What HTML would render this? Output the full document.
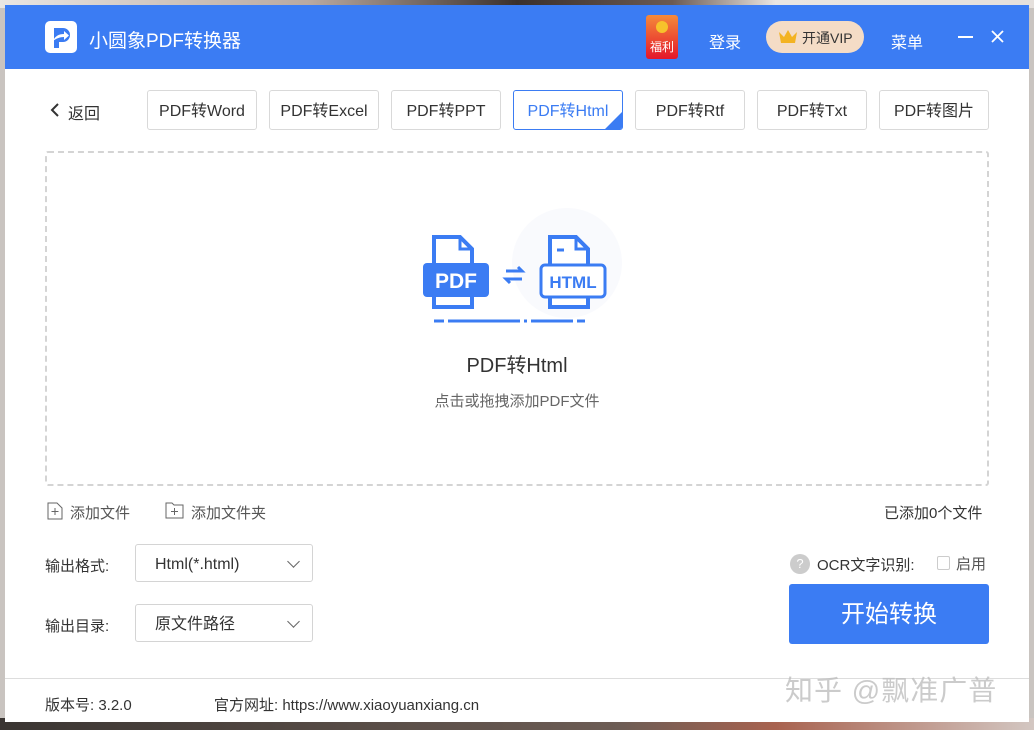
<!DOCTYPE html><html><head><meta charset="utf-8"><style>
*{margin:0;padding:0;box-sizing:border-box}
body{width:1034px;height:730px;overflow:hidden;background:#c9c4c0;font-family:"Liberation Sans","Noto Sans CJK SC",sans-serif;position:relative;color:#333}
.bgtop{position:absolute;left:0;top:0;width:1034px;height:8px;background:linear-gradient(90deg,#e9e6e3 0,#b9a9a0 30%,#3a302c 50%,#6b5a52 65%,#eae6e2 75%,#e5e0dc 100%)}
.bgbot{position:absolute;left:0;top:718px;width:1034px;height:12px;background:linear-gradient(90deg,#3a3532 0,#6d5d55 60%,#a8624f 75%,#d3c7c2 100%)}
.win{position:absolute;left:5px;top:5px;width:1024px;height:717px;background:#fff;overflow:hidden}
.hdr{position:absolute;left:0;top:0;width:1024px;height:64px;background:#3b7cf3;color:#fff}
.abs{position:absolute}
.tab{position:absolute;top:85px;width:110px;height:40px;border:1px solid #d9d9d9;border-radius:3px;font-size:16px;text-align:center;line-height:42px;color:#333}
.sel{border-color:#3b7cf3;color:#3b7cf3;overflow:hidden}
.sel:after{content:"";position:absolute;right:-12px;bottom:-12px;width:24px;height:24px;background:#3b7cf3;transform:rotate(45deg)}
.sel span.ck{position:absolute;right:2px;bottom:-9px;color:#fff;font-size:11px;z-index:2}
.drop{position:absolute;left:40px;top:146px;width:944px;height:335px;border:2px dashed #d4d4d4;border-radius:3px}
.sel-box{position:absolute;left:130px;width:178px;height:38px;border:1px solid #d4d4d4;border-radius:3px;font-size:16px;line-height:40px;padding-left:19px}
.sel-box:after{content:"";position:absolute;right:14px;top:12px;width:8px;height:8px;border-right:1.5px solid #666;border-bottom:1.5px solid #666;transform:rotate(45deg)}
</style></head><body>
<div class="bgtop"></div><div class="bgbot"></div>
<div class="win">
<div class="hdr">
 <div class="abs" style="left:40px;top:16px;width:32px;height:32px;background:#fff;border-radius:5px">
  <svg width="32" height="32" viewBox="0 0 32 32"><path d="M9 27V7h9a7 7 0 0 1 0 14h-4v6z" fill="#3b7cf3"/><path d="M8 20c2-5 6-7 11-7v-3l5 4.5-5 4.5v-3c-4 0-8 1.5-11 4z" fill="#fff"/></svg>
 </div>
 <div class="abs" style="left:84px;top:21px;font-size:19px">小圆象PDF转换器</div>
 <div class="abs" style="left:641px;top:10px;width:32px;height:44px;border-radius:3px;background:linear-gradient(#f58a3a,#e4162b)"><div style="position:absolute;left:10px;top:6px;width:12px;height:12px;border-radius:6px;background:#f7c22b"></div><div style="position:absolute;left:0;top:23px;width:32px;text-align:center;font-size:12px">福利</div></div>
 <div class="abs" style="left:704px;top:24px;font-size:16px">登录</div>
 <div class="abs" style="left:761px;top:16px;width:98px;height:32px;border-radius:16px;background:#f4dcc6;color:#333;font-size:14px;line-height:34px;padding-left:36px">开通VIP
  <svg class="abs" style="left:12px;top:8px" width="20" height="16" viewBox="0 0 20 16"><path d="M1 3l5 5 4-7 4 7 5-5-2 11H3z" fill="#f3b322"/></svg></div>
 <div class="abs" style="left:886px;top:24px;font-size:16px">菜单</div>
 <div class="abs" style="left:953px;top:31px;width:15px;height:2px;background:#fff"></div>
 <svg class="abs" style="left:986px;top:25px" width="13" height="13"><path d="M1 1l11 11M12 1L1 12" stroke="#fff" stroke-width="1.8"/></svg>
</div>
<svg class="abs" style="left:45px;top:97px" width="10" height="16"><path d="M8 2L2 8l6 6" stroke="#333" stroke-width="2" fill="none"/></svg>
<div class="abs" style="left:63px;top:95px;font-size:16px">返回</div>
<div class="tab" style="left:142px">PDF转Word</div>
<div class="tab" style="left:264px">PDF转Excel</div>
<div class="tab" style="left:386px">PDF转PPT</div>
<div class="tab sel" style="left:508px">PDF转Html<span class="ck">✔</span></div>
<div class="tab" style="left:630px">PDF转Rtf</div>
<div class="tab" style="left:752px">PDF转Txt</div>
<div class="tab" style="left:874px">PDF转图片</div>
<div class="drop">
 <div class="abs" style="left:465px;top:55px;width:110px;height:110px;border-radius:55px;background:#f9fafd"></div>
 <svg class="abs" style="left:373px;top:80px" width="190" height="100" viewBox="0 0 190 100">
  <path d="M14 4h26l12 12v58H14z" fill="#fff" stroke="#3b7cf3" stroke-width="4"/><path d="M40 4v12h12" fill="none" stroke="#3b7cf3" stroke-width="3"/>
  <rect x="3" y="30" width="66" height="34" rx="4" fill="#3b7cf3"/>
  <text x="36" y="55" font-size="21" font-weight="bold" fill="#fff" text-anchor="middle" font-family="Liberation Sans,sans-serif">PDF</text>
  <path d="M86 38h16l-4-4M102 46H86l4 4" stroke="#3b7cf3" stroke-width="3" fill="none"/>
  <path d="M130 4h26l12 12v58h-38z" fill="#fff" stroke="#3b7cf3" stroke-width="4"/><path d="M156 4v12h12" fill="none" stroke="#3b7cf3" stroke-width="3"/><path d="M137 17h7" stroke="#3b7cf3" stroke-width="3"/>
  <rect x="121" y="32" width="64" height="32" rx="4" fill="#fff" stroke="#3b7cf3" stroke-width="3"/>
  <text x="153" y="55" font-size="17" font-weight="bold" fill="#3b7cf3" text-anchor="middle" font-family="Liberation Sans,sans-serif">HTML</text>
  <path d="M14 88h10M28 88h72M104 88h3M111 88h42M157 88h8" stroke="#3b7cf3" stroke-width="3"/>
 </svg>
 <div class="abs" style="left:0;width:940px;top:196px;text-align:center;font-size:20px;color:#333">PDF转Html</div>
 <div class="abs" style="left:0;width:940px;top:237px;text-align:center;font-size:15px;color:#666">点击或拖拽添加PDF文件</div>
</div>
<svg class="abs" style="left:42px;top:497px" width="16" height="18"><path d="M1 1h9l5 5v11H1z" fill="none" stroke="#666"/><path d="M8 6v7M4.5 9.5h7" stroke="#666"/></svg>
<div class="abs" style="left:65px;top:497px;font-size:15px;color:#555">添加文件</div>
<svg class="abs" style="left:160px;top:497px" width="19" height="17"><path d="M1 1h6l2 2h9v13H1z" fill="none" stroke="#666"/><path d="M9.5 6v7M6 9.5h7" stroke="#666"/></svg>
<div class="abs" style="left:186px;top:497px;font-size:15px;color:#555">添加文件夹</div>
<div class="abs" style="left:879px;top:497px;font-size:15px;color:#333">已添加0个文件</div>
<div class="abs" style="left:40px;top:550px;font-size:15px">输出格式:</div>
<div class="sel-box" style="top:539px">Html(*.html)</div>
<div class="abs" style="left:40px;top:610px;font-size:15px">输出目录:</div>
<div class="sel-box" style="top:599px">原文件路径</div>
<div class="abs" style="left:785px;top:549px;width:20px;height:20px;border-radius:10px;background:#ccc;color:#fff;font-size:13px;text-align:center;line-height:20px">?</div>
<div class="abs" style="left:812px;top:549px;font-size:15px">OCR文字识别:</div>
<div class="abs" style="left:932px;top:551px;width:13px;height:14px;border:1px solid #ccc;border-radius:2px"></div>
<div class="abs" style="left:951px;top:548px;font-size:15px;color:#555">启用</div>
<div class="abs" style="left:784px;top:579px;width:200px;height:60px;background:#3b7cf3;border-radius:3px;color:#fff;font-size:24px;text-align:center;line-height:62px">开始转换</div>
<div class="abs" style="left:0;top:673px;width:1024px;height:1px;background:#ddd"></div>
<div class="abs" style="left:40px;top:689px;font-size:15px">版本号: 3.2.0</div>
<div class="abs" style="left:209px;top:689px;font-size:15px">官方网址: https://www.xiaoyuanxiang.cn</div>
<div class="abs" style="left:780px;top:664px;font-size:28px;color:rgba(190,190,190,.8);letter-spacing:1px">知乎 @飘准广普</div>
</div>
</body></html>
